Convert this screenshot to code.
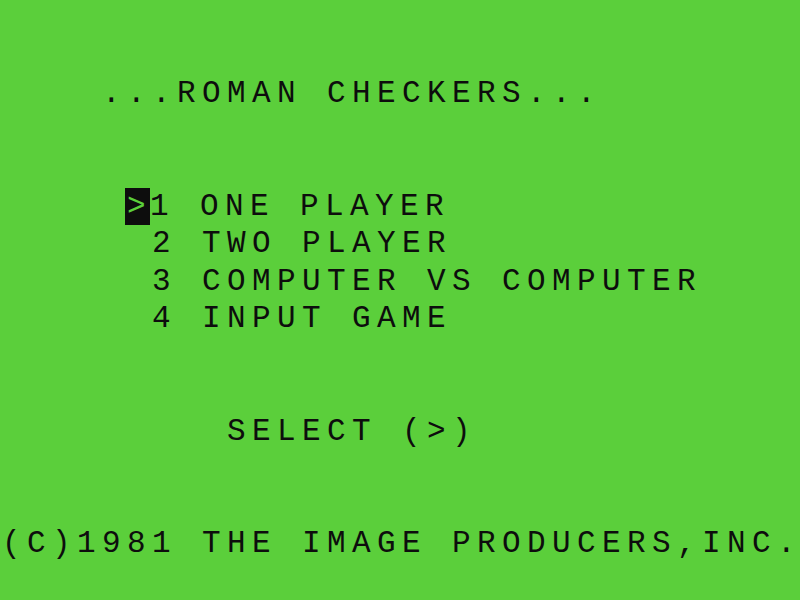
const MENU = [
  { key: '1', label: 'ONE PLAYER' },
  { key: '2', label: 'TWO PLAYER' },
  { key: '3', label: 'COMPUTER VS COMPUTER' },
  { key: '4', label: 'INPUT GAME' },
];

// one text row of the 32-column screen; each cell is 25px wide, 37.5px tall
function Row({ children }: { children?: React.ReactNode }) {
  return <div className="h-[37.5px] leading-[37.5px] whitespace-pre">{children}</div>;
}

export default function App() {
  const selected = 0;

  return (
    <div
      className="w-[800px] h-[600px] overflow-hidden bg-[#5bcf3b] text-[#0d0d0d] text-[31px] tracking-[6.4px] pl-[2px]"
      style={{ fontFamily: '"Liberation Mono", "DejaVu Sans Mono", monospace' }}
    >
      <Row />
      <Row />
      <Row>{'    ...ROMAN CHECKERS...'}</Row>
      <Row />
      <Row />
      {MENU.map((item, i) => (
        <Row key={item.key}>
          {'     '}
          {i === selected ? (
            <span className="inline-block w-[25px] h-[37.5px] -ml-[2px] pl-[2px] bg-[#0d0d0d] text-[#5bcf3b] align-top">
              {'>'}
            </span>
          ) : (
            ' '
          )}
          {`${item.key} ${item.label}`}
        </Row>
      ))}
      <Row />
      <Row />
      <Row>{'         SELECT (>)'}</Row>
      <Row />
      <Row />
      <Row>
        {'(C)1981 THE IMAGE PRODUCERS,INC'}
        <span className="tracking-normal">.</span>
      </Row>
    </div>
  );
}
